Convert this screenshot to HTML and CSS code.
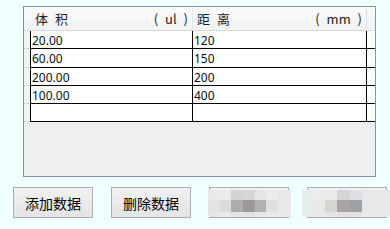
FILE: index.html
```html
<!DOCTYPE html>
<html lang="zh">
<head>
<meta charset="utf-8">
<link rel="stylesheet" href="styles.css">
</head>
<body>
<div class="page">
  <div class="grid-box">
    <div class="row head">
      <div class="rh"></div>
      <div class="hc"><span>体 积</span><span>( ul )</span></div>
      <div class="hc"><span>距 离</span><span>( mm )</span></div>
      <div class="hf"></div>
    </div>
    <div class="row data"><div class="rh"></div><div class="c">20.00</div><div class="c">120</div><div class="c f"></div></div>
    <div class="row data tall"><div class="rh"></div><div class="c">60.00</div><div class="c">150</div><div class="c f"></div></div>
    <div class="row data"><div class="rh"></div><div class="c">200.00</div><div class="c">200</div><div class="c f"></div></div>
    <div class="row data"><div class="rh"></div><div class="c">100.00</div><div class="c">400</div><div class="c f"></div></div>
    <div class="row data"><div class="rh"></div><div class="c"></div><div class="c"></div><div class="c f"></div></div>
  </div>
  <div class="buttons">
    <button class="btn">添加数据</button>
    <button class="btn">删除数据</button>
    <button class="btn masked">
      <span class="mosaic m1">
        <i style="background:#e8eaea"></i><i style="background:#ebebeb"></i><i style="background:#d3d3d3"></i><i style="background:#d6d6d6"></i><i style="background:#e5e5e5"></i><i style="background:#ececec"></i><i style="background:#e8e8e8"></i>
        <i style="background:#e2e4e4"></i><i style="background:#dcdcd8"></i><i style="background:#acacac"></i><i style="background:#9c9898"></i><i style="background:#b0b2b2"></i><i style="background:#e0e0e0"></i><i style="background:#e8e8e8"></i>
        <i style="background:#e6e8e8"></i><i style="background:#e8e8e8"></i><i style="background:#e4e4e4"></i><i style="background:#e2e2e2"></i><i style="background:#e6e6e6"></i><i style="background:#e9e9e9"></i><i style="background:#e9e9e9"></i>
      </span>
    </button>
    <button class="btn masked">
      <span class="mosaic m2">
        <i style="background:#e5eeee"></i><i style="background:#ececec"></i><i style="background:#ebe9e9"></i><i style="background:#d5d3d5"></i><i style="background:#dfdfe3"></i><i style="background:#e8e8e8"></i><i style="background:#e8e8e8"></i>
        <i style="background:#e5eeee"></i><i style="background:#e8e8e8"></i><i style="background:#d8d6d2"></i><i style="background:#a8a2a6"></i><i style="background:#9ea1a4"></i><i style="background:#e8e8e8"></i><i style="background:#e8e8e8"></i>
        <i style="background:#e6eeee"></i><i style="background:#e9e9e9"></i><i style="background:#e6e6e6"></i><i style="background:#e2e0e2"></i><i style="background:#e2e2e4"></i><i style="background:#e9e9e9"></i><i style="background:#e9e9e9"></i>
      </span>
    </button>
  </div>
</div>
</body>
</html>
```
FILE: styles.css
```css
html, body {
  margin: 0;
  padding: 0;
  background: #f0ffff;
}
body {
  width: 390px;
  height: 229px;
  overflow: hidden;
  font-family: "Noto Sans", "Noto Sans CJK SC", sans-serif;
  color: #111;
}
.page {
  padding: 6px 0 0 13px;
  display: flex;
  flex-direction: column;
  gap: 10px;
}
.grid-box {
  margin-left: 10px;
  width: 353px;
  height: 171px;
  box-sizing: border-box;
  border: 1px solid #7f92b0;
  background: #efefef;
}
.row {
  display: grid;
  grid-template-columns: 6px 162px 174px 9px;
}
.head {
  height: 24px;
  box-sizing: border-box;
  border-bottom: 1px solid #d5d9df;
  background: linear-gradient(#fbfbfc, #f1f2f4);
}
.head .rh {
  background: transparent;
}
.hc {
  display: flex;
  justify-content: space-between;
  align-items: center;
  padding: 0 4px 1px 4px;
  border-left: 1px solid #e2e5ea;
  font-family: "Noto Sans CJK SC", "Noto Sans", sans-serif;
  font-size: 13px;
  word-spacing: 4px;
  color: #1c1c1c;
  white-space: pre;
}
.head .rh + .hc {
  border-left: 1px solid transparent;
}
.hf {
  border-left: 1px solid #dcdfe4;
}
.data {
  height: 18px;
}
.data.tall {
  height: 19px;
}
.data .rh {
  background: #f3f3f3;
  border-bottom: 1px solid #d6d6d6;
  box-sizing: border-box;
}
.c {
  box-sizing: border-box;
  background: #fff;
  border-left: 1px solid #000;
  border-bottom: 1px solid #000;
  padding: 2px 0 0 1px;
  font-size: 12px;
  line-height: 15px;
  color: #0d0d12;
}
.c.f {
  border-left: 1px solid #000;
}
.buttons {
  display: flex;
  gap: 18px;
}
.btn {
  width: 80px;
  height: 31px;
  box-sizing: border-box;
  margin: 0;
  padding: 0;
  border: 1px solid #adadad;
  border-radius: 0;
  background: linear-gradient(#f1f1f1, #e4e4e4);
  font-family: "Noto Sans CJK SC", sans-serif;
  font-size: 14px;
  color: #000;
  display: flex;
  align-items: center;
  justify-content: center;
  overflow: visible;
}
.btn.masked {
  align-items: flex-start;
}
.mosaic {
  display: grid;
  flex: none;
  margin-top: 2px;
}
.mosaic i {
  display: block;
}
.m1 {
  grid-template-columns: 12px 11px 12px 12px 11px 12px 13px;
  grid-template-rows: 10px 12px 5px;
}
.btn.masked:last-child {
  justify-content: flex-start;
}
.m2 {
  margin-left: -6px;
  grid-template-columns: 11px 12px 12px 13px 12px 13px 15px;
  grid-template-rows: 10px 12px 5px;
}
```
